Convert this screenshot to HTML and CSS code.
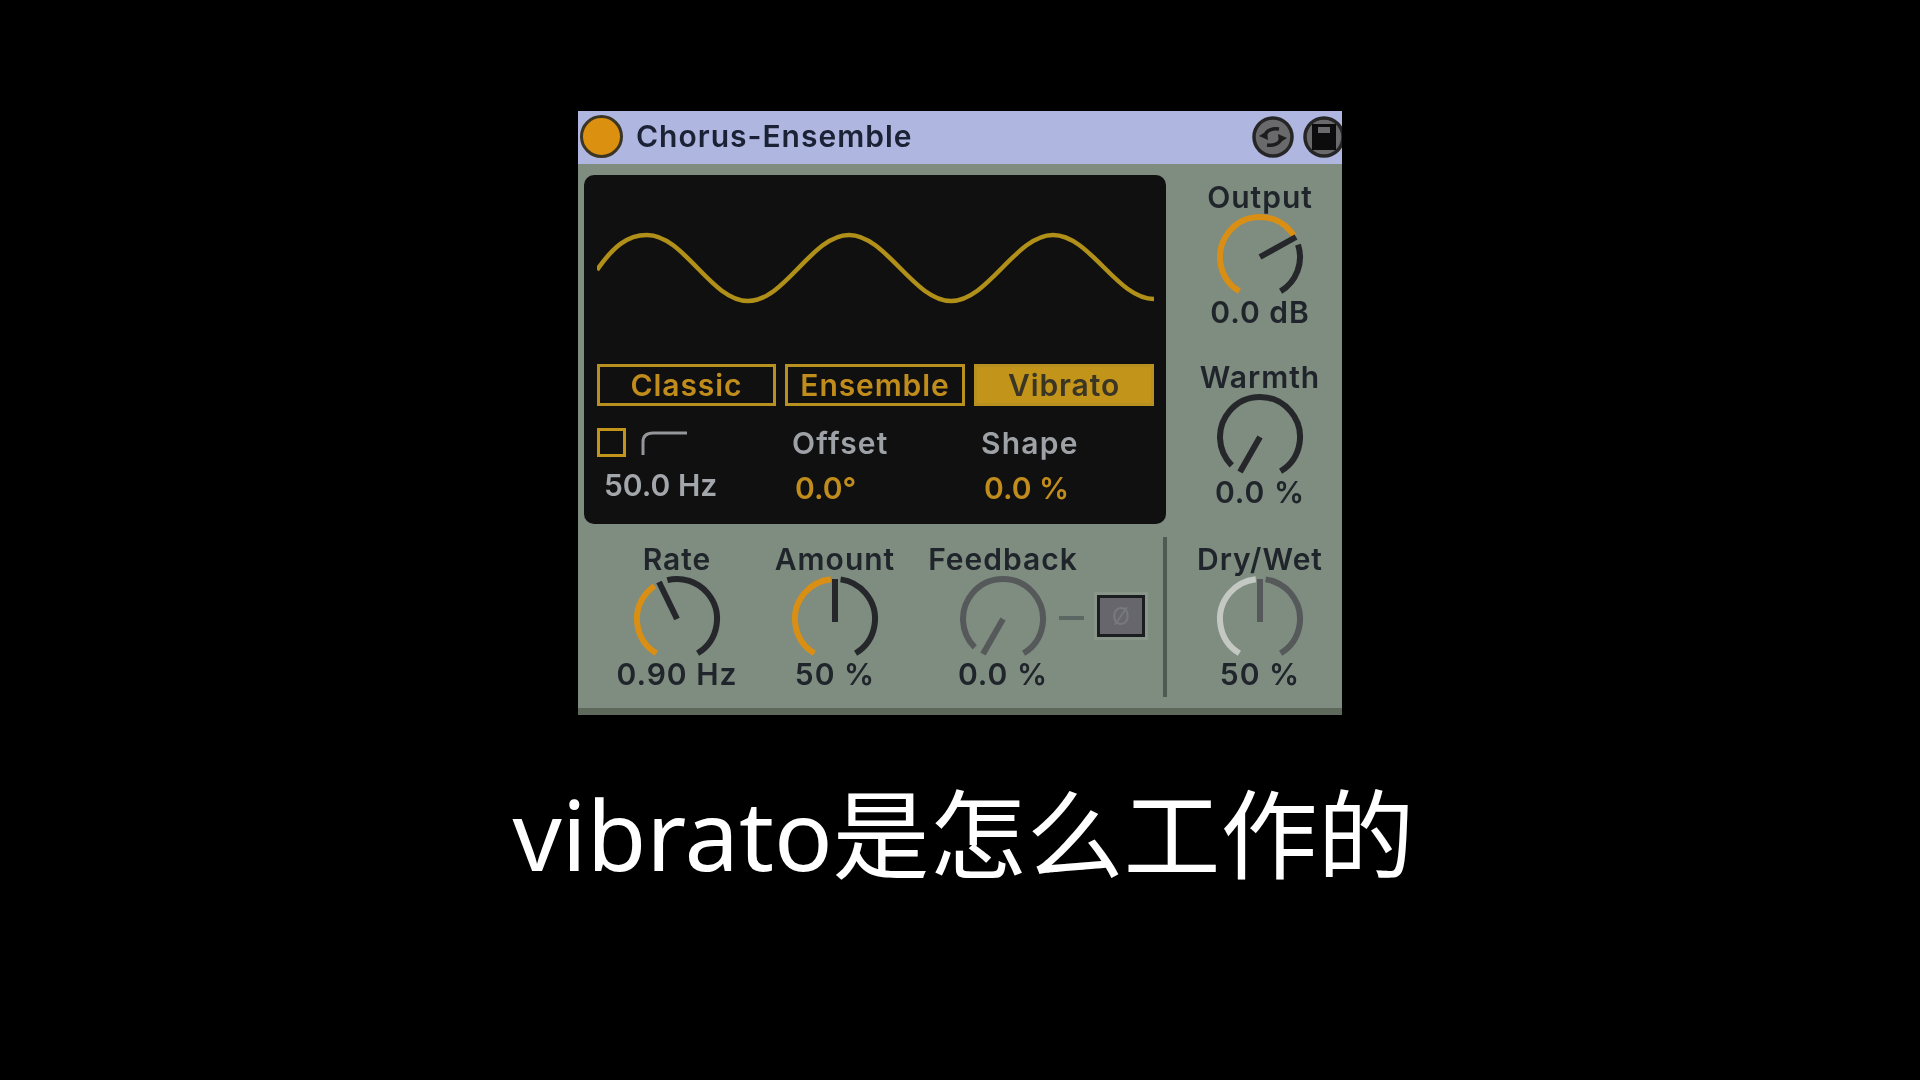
FILE: index.html
```html
<!DOCTYPE html>
<html lang="en">
<head>
    <meta charset="UTF-8">
    <title>Chorus-Ensemble</title>
    <link rel="stylesheet" href="styles.css">
</head>
<body>
    <div class="device">
        <div class="title-bar">
            <div class="power"></div>
            <div class="title">Chorus-Ensemble</div>
            <svg class="head-icon" viewBox="-21 -21 42 42">
                <circle class="head-disc" r="19"></circle>
                <path class="swap" d="M-8 -1 C-7 -7 0 -9 6 -8 M8 1 C7 7 0 9 -6 8"></path>
                <path class="swap-tip" d="M-14 -1 L-6 -6 L-5 3 Z M14 1 L6 6 L5 -3 Z"></path>
            </svg>
            <svg class="head-icon save-icon" viewBox="-21 -21 42 42">
                <circle class="head-disc" r="19"></circle>
                <path class="save" d="M-12 -13 H12 V13 H-12 Z M-6 -10 V-4 H6 V-10 Z" fill-rule="evenodd"></path>
            </svg>
        </div>
        <div class="panel">
            <div class="screen">
                <svg class="wave" viewBox="0 0 557 189">
                    <path d="M0 95 C16 72 30 60 50 60 C87 60 114 126 151 126 C188 126 215 60 252 60 C289 60 317 126 354 126 C391 126 419 60 456 60 C493 60 520 124 557 124"></path>
                </svg>
                <div class="modes">
                    <div class="mode">Classic</div>
                    <div class="mode">Ensemble</div>
                    <div class="mode active">Vibrato</div>
                </div>
                <div class="params">
                    <div class="param">
                        <div class="filter">
                            <div class="check"></div>
                            <svg class="hp-icon" viewBox="0 0 46 24"><path d="M2 24 V11 Q2 2 12 2 H46"></path></svg>
                        </div>
                        <div class="hz">50.0 Hz</div>
                    </div>
                    <div class="param">
                        <div class="param-label">Offset</div>
                        <div class="param-value">0.0°</div>
                    </div>
                    <div class="param">
                        <div class="param-label">Shape</div>
                        <div class="param-value">0.0 %</div>
                    </div>
                </div>
            </div>
            <div class="side">
                <div class="knob">
                    <div class="label">Output</div>
                    <svg class="dial" viewBox="-46 -46 92 92">
                        <path class="arc off" pathLength="298" stroke-dasharray="0 221 298" d="M-20.6 34.3 A40 40 0 1 1 20.6 34.3"></path>
                        <path class="arc on" pathLength="298" stroke-dasharray="207 298" d="M-20.6 34.3 A40 40 0 1 1 20.6 34.3"></path>
                        <line class="needle" x1="0" y1="0" x2="36" y2="-20"></line>
                    </svg>
                    <div class="label">0.0 dB</div>
                </div>
                <div class="knob">
                    <div class="label">Warmth</div>
                    <svg class="dial" viewBox="-46 -46 92 92">
                        <path class="arc off" pathLength="298" stroke-dasharray="0 14 298" d="M-20.6 34.3 A40 40 0 1 1 20.6 34.3"></path>
                        <line class="needle" x1="0" y1="0" x2="-20" y2="35"></line>
                    </svg>
                    <div class="label">0.0 %</div>
                </div>
            </div>
            <div class="bottom">
                <div class="knob rate">
                    <div class="label">Rate</div>
                    <svg class="dial" viewBox="-46 -46 92 92">
                        <path class="arc off" pathLength="298" stroke-dasharray="0 135 298" d="M-20.6 34.3 A40 40 0 1 1 20.6 34.3"></path>
                        <path class="arc on" pathLength="298" stroke-dasharray="115 298" d="M-20.6 34.3 A40 40 0 1 1 20.6 34.3"></path>
                        <line class="needle" x1="0" y1="0" x2="-18" y2="-37"></line>
                    </svg>
                    <div class="label">0.90 Hz</div>
                </div>
                <div class="knob amount">
                    <div class="label">Amount</div>
                    <svg class="dial" viewBox="-46 -46 92 92">
                        <path class="arc off" pathLength="298" stroke-dasharray="0 157 298" d="M-20.6 34.3 A40 40 0 1 1 20.6 34.3"></path>
                        <path class="arc on" pathLength="298" stroke-dasharray="143 298" d="M-20.6 34.3 A40 40 0 1 1 20.6 34.3"></path>
                        <line class="needle" x1="0" y1="3" x2="0" y2="-40"></line>
                    </svg>
                    <div class="label">50 %</div>
                </div>
                <div class="knob feedback muted">
                    <div class="label">Feedback</div>
                    <svg class="dial" viewBox="-46 -46 92 92">
                        <path class="arc off" pathLength="298" stroke-dasharray="0 14 298" d="M-20.6 34.3 A40 40 0 1 1 20.6 34.3"></path>
                        <line class="needle" x1="0" y1="0" x2="-20" y2="35"></line>
                    </svg>
                    <div class="label">0.0 %</div>
                </div>
                <div class="dash"></div>
                <div class="phase">Ø</div>
                <div class="divider"></div>
            </div>
            <div class="side-bottom">
                <div class="knob muted">
                    <div class="label">Dry/Wet</div>
                    <svg class="dial" viewBox="-46 -46 92 92">
                        <path class="arc off" pathLength="298" stroke-dasharray="0 157 298" d="M-20.6 34.3 A40 40 0 1 1 20.6 34.3"></path>
                        <path class="arc light" pathLength="298" stroke-dasharray="143 298" d="M-20.6 34.3 A40 40 0 1 1 20.6 34.3"></path>
                        <line class="needle" x1="0" y1="3" x2="0" y2="-40"></line>
                    </svg>
                    <div class="label">50 %</div>
                </div>
            </div>
        </div>
    </div>
    <div class="caption">vibrato是怎么工作的</div>
</body>
</html>
```

FILE: styles.css
```css
body {
    margin: 0;
    height: 100vh;
    overflow: hidden;
    background-color: #000;
    display: flex;
    flex-direction: column;
    align-items: center;
    font-family: Inter, "Liberation Sans", sans-serif;
}
.device {
    width: 764px;
    height: 604px;
    margin-top: 111px;
    display: flex;
    flex-direction: column;
    background-color: #7f8c80;
    border-bottom: 7px solid #5e695c;
    box-sizing: border-box;
    overflow: hidden;
    filter: blur(0.7px);
}
.title-bar {
    height: 53px;
    flex: none;
    box-sizing: border-box;
    padding: 0 0 2px 2px;
    display: flex;
    align-items: center;
    background-color: #afb7e1;
}
.power {
    width: 37px;
    height: 37px;
    border: 3px solid #3c3524;
    border-radius: 50%;
    background-color: #dc900f;
}
.title {
    margin-left: 13px;
    padding-bottom: 2px;
    font-size: 30px;
    font-weight: 600;
    letter-spacing: 1px;
    color: #1c2236;
    flex: 1;
}
.head-icon {
    width: 42px;
    height: 42px;
    flex: none;
}
.save-icon {
    margin-left: 9px;
    margin-right: -3px;
}
.head-disc {
    fill: #6a6a6c;
    stroke: #262626;
    stroke-width: 3.5;
}
.swap {
    fill: none;
    stroke: #1d1d1d;
    stroke-width: 3.5;
}
.swap-tip {
    fill: #1d1d1d;
}
.save {
    fill: #0c0c0c;
}
.panel {
    flex: 1;
    display: grid;
    grid-template-columns: 600px 1fr;
    grid-template-rows: 366px 1fr;
}
.screen {
    margin: 11px 0 6px 6px;
    width: 582px;
    box-sizing: border-box;
    padding: 0 12px 0 13px;
    background-color: #101010;
    border-radius: 10px;
}
.wave {
    display: block;
    width: 557px;
    height: 189px;
}
.wave path {
    fill: none;
    stroke: #b09018;
    stroke-width: 4.5;
}
.modes {
    display: grid;
    grid-template-columns: 179px 180px 180px;
    gap: 9px;
}
.mode {
    height: 42px;
    box-sizing: border-box;
    border: 3px solid #b8901f;
    display: flex;
    align-items: center;
    justify-content: center;
    font-size: 30px;
    font-weight: 600;
    letter-spacing: 0.9px;
    color: #c08c1c;
}
.mode.active {
    background-color: #c2951a;
    color: #3a3524;
}
.params {
    display: grid;
    grid-template-columns: 195px 189px 1fr;
    margin-top: 22px;
}
.filter {
    display: flex;
    align-items: center;
    gap: 15px;
    height: 29px;
}
.check {
    width: 29px;
    height: 29px;
    box-sizing: border-box;
    border: 3px solid #c2951a;
}
.hp-icon {
    width: 46px;
    height: 24px;
}
.hp-icon path {
    fill: none;
    stroke: #94969a;
    stroke-width: 3;
}
.hz {
    margin: 11px 0 0 7px;
    font-size: 30px;
    font-weight: 600;
    line-height: 34px;
    color: #a3a7ab;
}
.param-label {
    font-size: 30px;
    font-weight: 600;
    letter-spacing: 1.2px;
    line-height: 30px;
    color: #9ea2a6;
}
.param-value {
    margin: 14px 0 0 3px;
    font-size: 30px;
    font-weight: 600;
    line-height: 32px;
    color: #c08c1c;
}
.side {
    display: flex;
    flex-direction: column;
    align-items: center;
    gap: 31px;
    padding-top: 16px;
}
.bottom {
    display: flex;
    align-items: flex-start;
    padding-top: 12px;
}
.side-bottom {
    display: flex;
    justify-content: center;
    padding-top: 12px;
}
.knob {
    display: flex;
    flex-direction: column;
    align-items: center;
    width: 164px;
}
.rate {
    margin-left: 17px;
}
.amount {
    margin-left: -6px;
}
.feedback {
    margin-left: 4px;
}
.label {
    font-size: 30px;
    font-weight: 600;
    letter-spacing: 1px;
    line-height: 34px;
    color: #20252b;
    white-space: nowrap;
}
.dial {
    width: 92px;
    height: 92px;
    margin: -3px 0 -8px;
    flex: none;
}
.arc {
    fill: none;
    stroke-width: 6;
}
.arc.on {
    stroke: #d98e14;
}
.arc.off {
    stroke: #25272a;
}
.arc.light {
    stroke: #c3c8c3;
}
.needle {
    stroke: #25272a;
    stroke-width: 6;
}
.muted .arc.off, .muted .needle {
    stroke: #55595a;
}
.dash {
    width: 25px;
    height: 4px;
    margin: 74px 0 0 -26px;
    background-color: #5c6662;
    flex: none;
}
.phase {
    width: 48px;
    height: 42px;
    flex: none;
    box-sizing: border-box;
    margin: 53px 0 0 13px;
    background-color: #66666c;
    border: 3px solid #1c1d20;
    outline: 3px solid #8a968a;
    display: flex;
    align-items: center;
    justify-content: center;
    font-size: 24px;
    color: #77797c;
}
.divider {
    width: 4px;
    height: 160px;
    margin: -5px 11px 0 auto;
    background-color: #4f5a52;
    flex: none;
}
.caption {
    margin: 53px 0 0 7px;
    font-family: "Noto Sans", "Noto Sans CJK SC", sans-serif;
    font-size: 97px;
    line-height: 130px;
    color: #fff;
    white-space: nowrap;
}
```
